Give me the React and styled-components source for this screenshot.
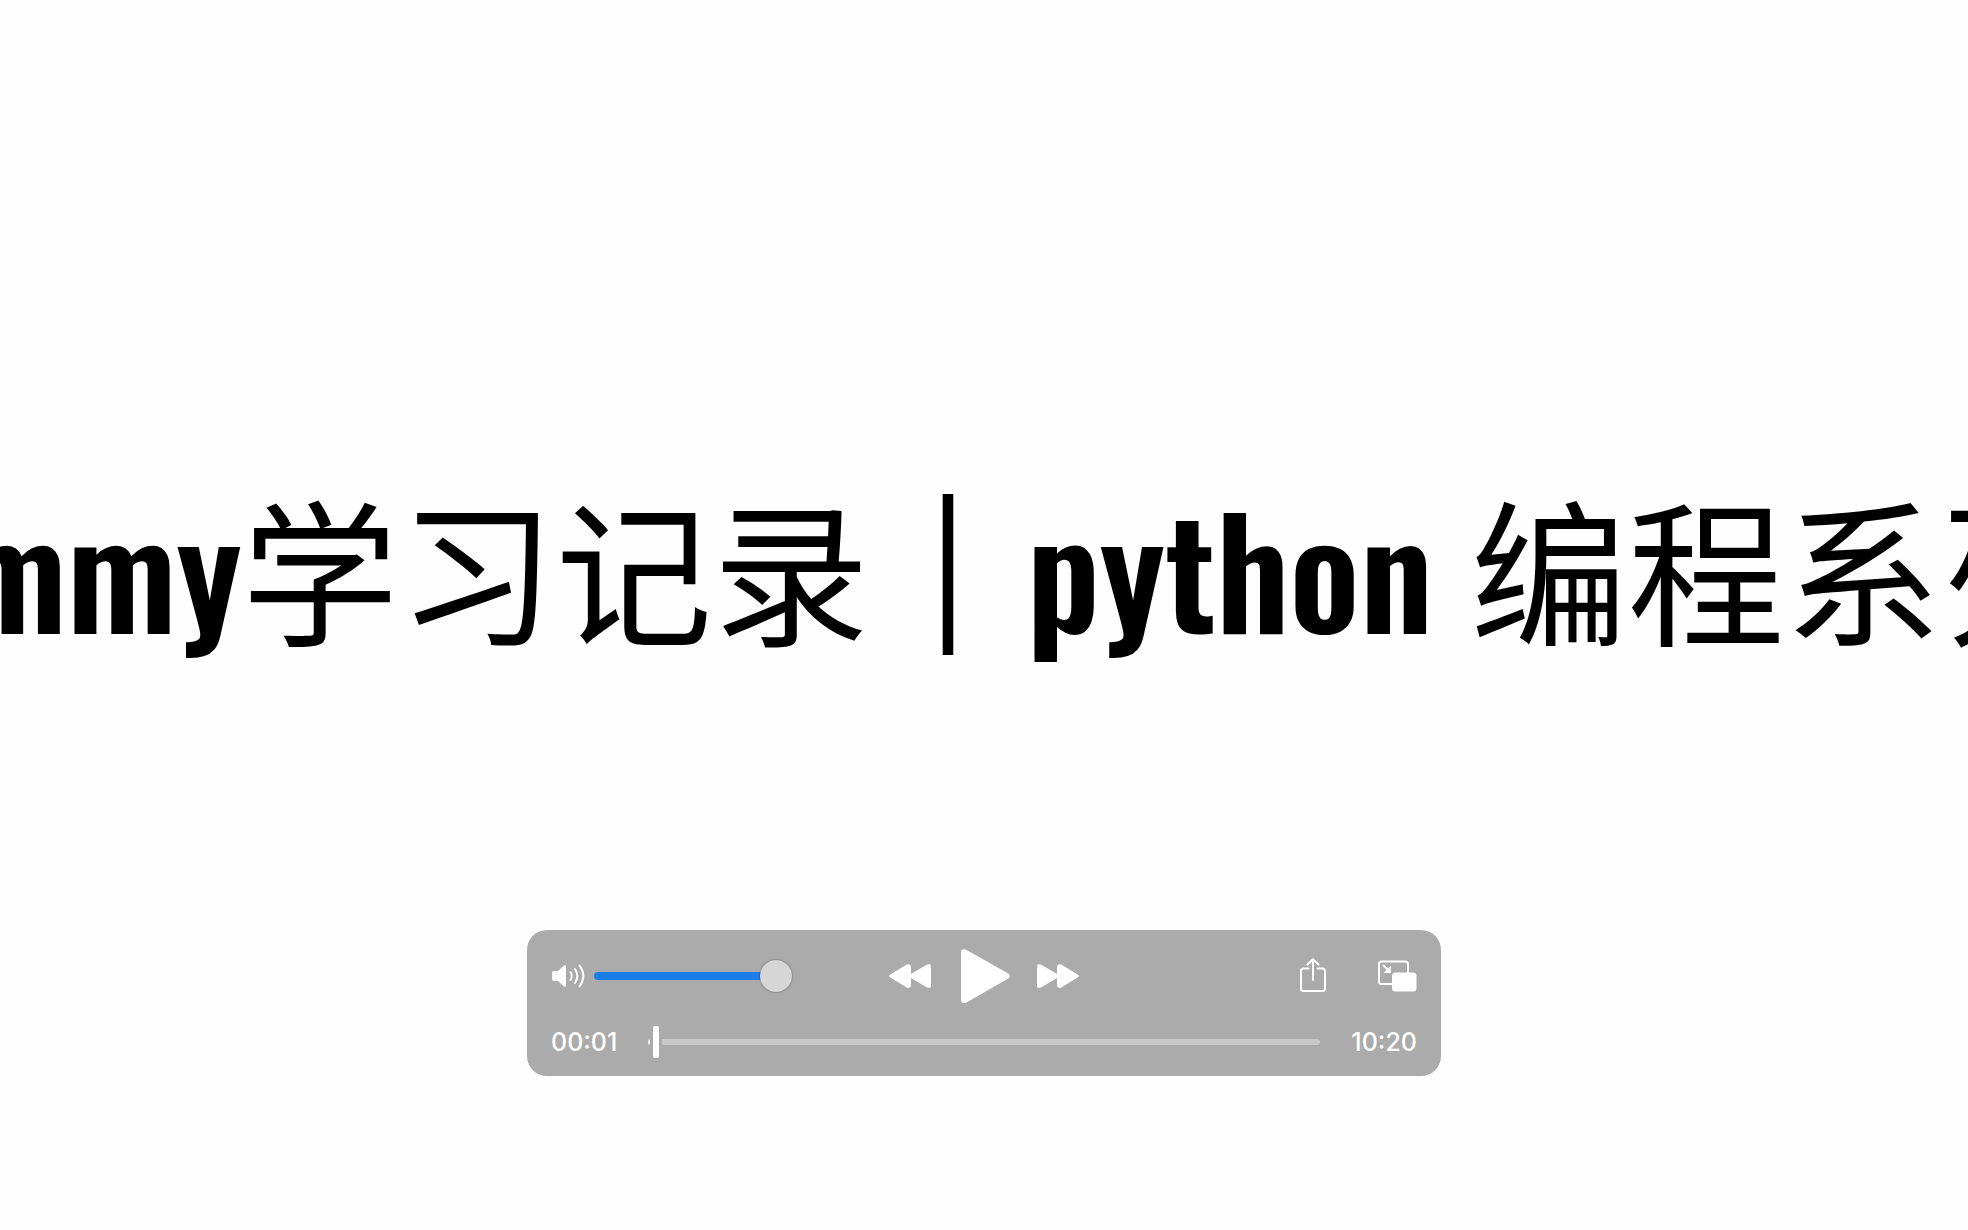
import React, { useState } from "react";
import styled, { createGlobalStyle } from "styled-components";

const GlobalStyle = createGlobalStyle`
  * {
    box-sizing: border-box;
  }

  body {
    margin: 0;
    background: #fefefe;
  }
`;

const Player = styled.main`
  display: flex;
  flex-direction: column;
  justify-content: space-between;
  align-items: center;
  min-height: 100vh;
  padding: 450px 0 154px;
  overflow: hidden;
  background: linear-gradient(#fefefe calc(100% - 16px), #fcfcfc);
`;

const Title = styled.h1`
  width: 100%;
  margin: 0;
  color: #000;
  font: 400 157px/232px "Noto Sans CJK SC", sans-serif;
  text-indent: -43px;
  white-space: nowrap;
`;

const Latin = styled.span`
  font: 600 149px/232px Oswald, "Roboto Condensed", sans-serif;
`;

const Divider = styled.span`
  -webkit-text-stroke: 4px #000;
`;

const Controls = styled.section`
  display: flex;
  flex-direction: column;
  gap: 22px;
  width: 914px;
  max-width: 100%;
  padding: 18px 24px;
  border-radius: 20px;
  background: #ababab;
`;

const Buttons = styled.div`
  display: grid;
  grid-template-columns: 1fr auto 1fr;
  align-items: center;
  height: 56px;
`;

const Group = styled.div`
  display: flex;
  align-items: center;
  justify-content: ${(p) => p.$justify || "flex-start"};
  gap: ${(p) => p.$gap}px;
`;

const IconButton = styled.button`
  display: flex;
  padding: 0;
  border: 0;
  background: none;
  color: #fff;
  cursor: pointer;

  svg {
    display: block;
    fill: currentColor;
  }
`;

const Volume = styled.input`
  appearance: none;
  width: 198px;
  height: 32px;
  margin: 0;
  background: transparent;

  &::-webkit-slider-runnable-track {
    height: 8px;
    border-radius: 4px;
    background: linear-gradient(
      to right,
      #1a7ce8 ${(p) => p.value}%,
      #c8c8c8 ${(p) => p.value}%
    );
  }

  &::-webkit-slider-thumb {
    appearance: none;
    width: 32px;
    height: 32px;
    margin-top: -12px;
    border-radius: 50%;
    background: #d6d6d6;
    box-shadow: 0 0 2px rgba(0, 0, 0, 0.5);
  }
`;

const Timeline = styled.div`
  display: flex;
  align-items: center;
  height: 32px;
`;

const Time = styled.time`
  width: 97px;
  color: #fff;
  font: 500 25px/32px Inter, sans-serif;
  text-align: ${(p) => p.$align || "left"};
`;

const Seek = styled.input`
  appearance: none;
  flex: 1;
  min-width: 0;
  height: 32px;
  margin: 0;
  background: transparent;

  &::-webkit-slider-runnable-track {
    height: 6px;
    border-radius: 3px;
    background: linear-gradient(
      to right,
      #f4f4f4 ${(p) => (p.value / p.max) * 100}%,
      #c8c8c8 ${(p) => (p.value / p.max) * 100}%
    );
  }

  &::-webkit-slider-thumb {
    appearance: none;
    width: 6px;
    height: 32px;
    margin-top: -13px;
    border-radius: 2px;
    background: #fff;
    box-shadow: 0 0 0 3px #ababab;
  }
`;

const VolumeIcon = () => (
  <svg width="34" height="24" viewBox="0 0 34 24">
    <path d="M3 7h4l6-5.400c1-.8 2-.4 2 .8v19.200c0 1.200-1 1.600-2 .8L7 17H3c-1.200 0-2-.8-2-2V9c0-1.200.8-2 2-2z" />
    <path
      d="M19.500 8q2.600 4 0 8M24 5q4.600 7 0 14M28.500 1.500q7.600 10.500 0 21"
      fill="none"
      stroke="currentColor"
      strokeWidth="2"
      strokeLinecap="round"
    />
  </svg>
);

const RewindIcon = () => (
  <svg width="42" height="24" viewBox="0 0 42 24">
    <path d="M1.300 10.400 17.200.800C19.600-.4 22 .4 22 2.800v7.200L37.600.800C39.800-.4 42 0 42 2v20c0 2-2.200 2.400-4.400 1.200L22 14v7.200c0 2.400-2.400 3.200-4.800 2L1.300 13.600c-1.700-1-1.700-2.200 0-3.200z" />
  </svg>
);

const ForwardIcon = () => (
  <svg width="42" height="24" viewBox="0 0 42 24">
    <path d="M40.700 10.400 24.800.800C22.400-.4 20 .4 20 2.800v7.200L4.400.800C2.200-.4 0 0 0 2v20c0 2 2.200 2.400 4.400 1.200L20 14v7.200c0 2.400 2.400 3.200 4.800 2l15.900-9.600c1.700-1 1.700-2.200 0-3.200z" />
  </svg>
);

const PlayIcon = () => (
  <svg width="54" height="56" viewBox="0 0 54 56">
    <path d="M4 4c0-3 2.600-3.600 6-1.800l41.200 23.200c2.200 1.400 2.200 3.800 0 5.200L10 54.200C6.600 56 4 55 4 52z" />
  </svg>
);

const ShareIcon = () => (
  <svg width="28" height="36" viewBox="0 0 28 36">
    <path
      d="M9.500 10.500H4.500Q2 10.500 2 13v17.500Q2 33 4.500 33h19q2.500 0 2.500-2.500V13Q26 10.500 23.500 10.500h-5M14 22V2M8.500 6.500 14 1.200l5.500 5.300"
      fill="none"
      stroke="currentColor"
      strokeWidth="2"
      strokeLinecap="round"
      strokeLinejoin="round"
    />
  </svg>
);

const PipIcon = () => (
  <svg width="40" height="32" viewBox="0 0 40 32">
    <path
      d="M15 24H4.500Q2 24 2 21.500V4Q2 1.500 4.500 1.500h24Q31 1.500 31 4v9M6 5l6 6"
      fill="none"
      stroke="currentColor"
      strokeWidth="2"
    />
    <path d="M14 5.500V13H6.500z" />
    <rect x="15" y="12.500" width="24.500" height="19" rx="3.500" />
  </svg>
);

export default function App() {
  const [volume, setVolume] = useState(100);
  const [position, setPosition] = useState(5);

  return (
    <>
      <GlobalStyle />
      <Player>
        <Title>
          <Latin>mmy</Latin>
          学习记录<Divider>｜</Divider>
          <Latin>python </Latin>
          编程系列
        </Title>

        <Controls aria-label="Playback controls">
          <Buttons>
            <Group $gap={9}>
              <IconButton aria-label="Mute">
                <VolumeIcon />
              </IconButton>
              <Volume
                type="range"
                aria-label="Volume"
                min="0"
                max="100"
                value={volume}
                onChange={(e) => setVolume(e.target.value)}
              />
            </Group>
            <Group $gap={26}>
              <IconButton aria-label="Rewind">
                <RewindIcon />
              </IconButton>
              <IconButton aria-label="Play">
                <PlayIcon />
              </IconButton>
              <IconButton aria-label="Fast forward">
                <ForwardIcon />
              </IconButton>
            </Group>
            <Group $gap={50} $justify="flex-end">
              <IconButton aria-label="Share">
                <ShareIcon />
              </IconButton>
              <IconButton aria-label="Picture in picture">
                <PipIcon />
              </IconButton>
            </Group>
          </Buttons>

          <Timeline>
            <Time>00:01</Time>
            <Seek
              type="range"
              aria-label="Position"
              min="0"
              max="620"
              value={position}
              onChange={(e) => setPosition(e.target.value)}
            />
            <Time $align="right">10:20</Time>
          </Timeline>
        </Controls>
      </Player>
    </>
  );
}
